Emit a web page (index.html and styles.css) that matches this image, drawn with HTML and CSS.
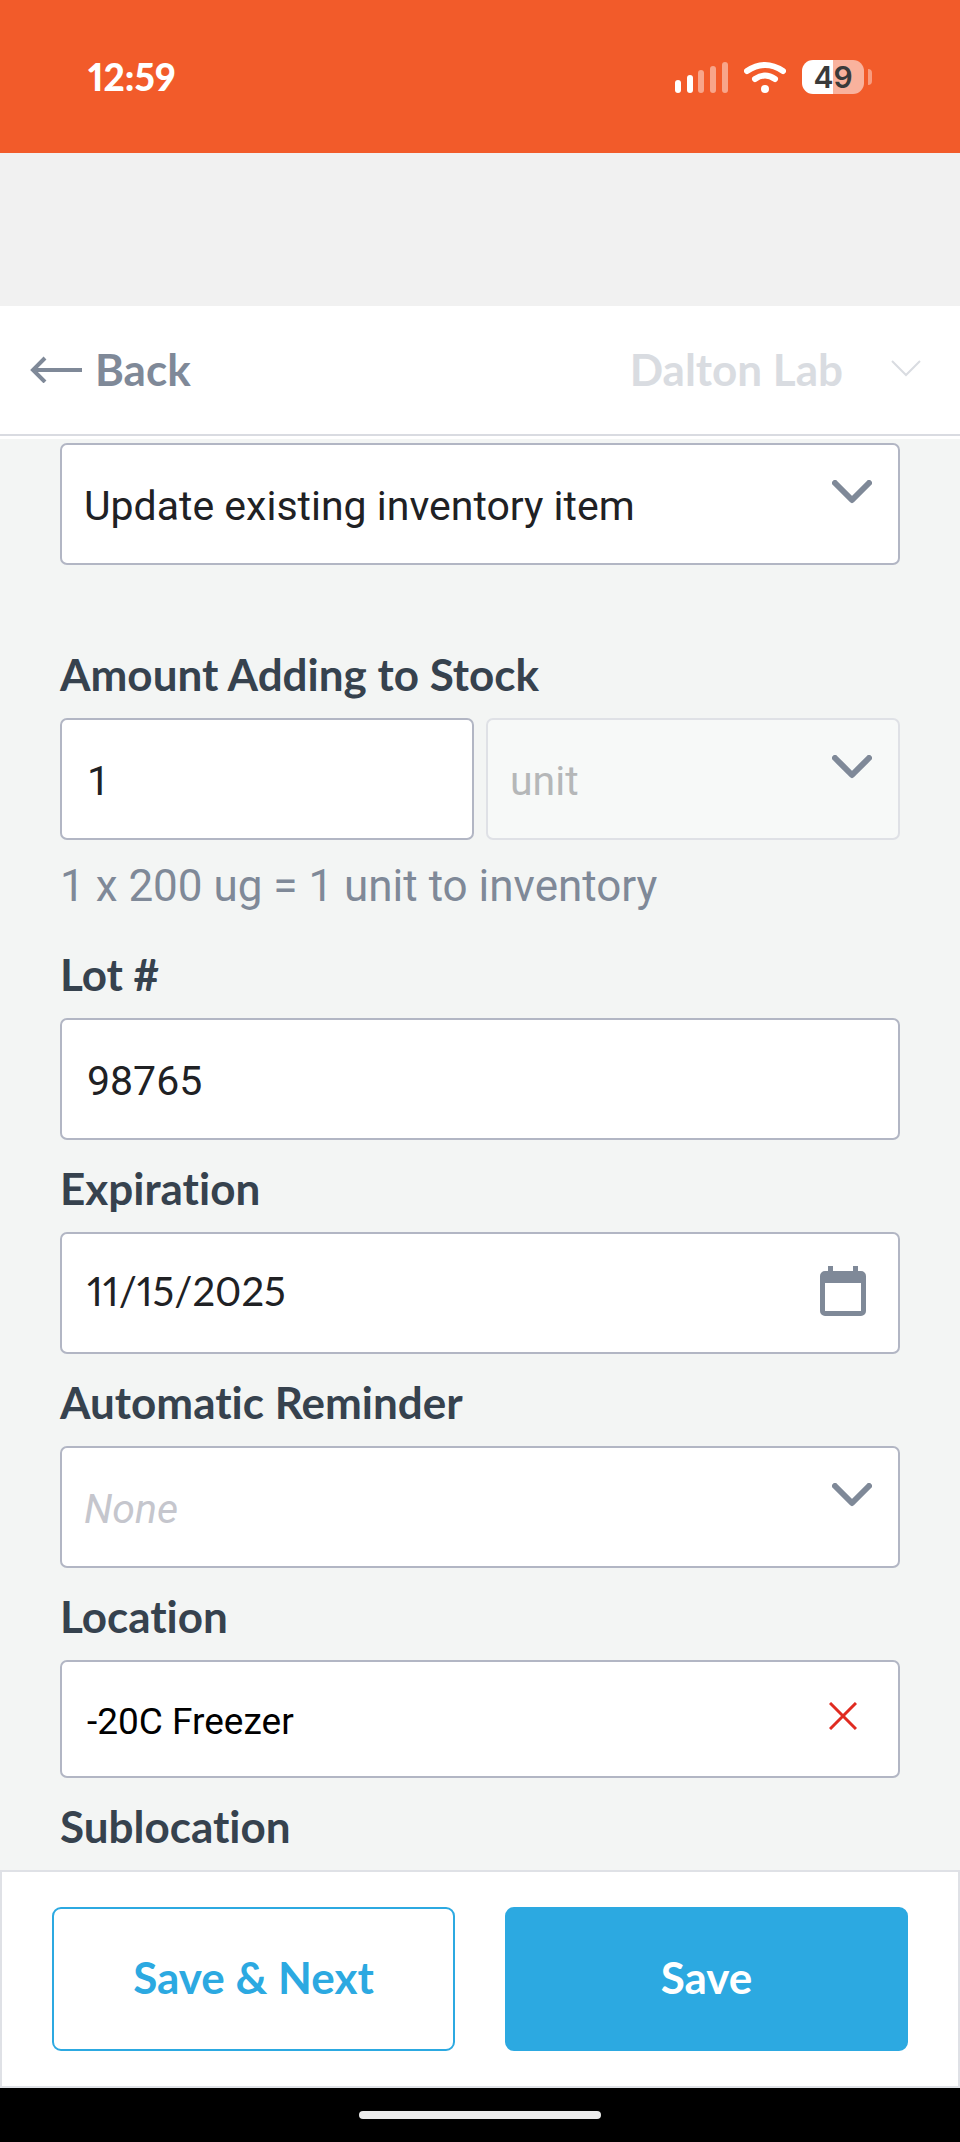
FILE: index.html
```html
<!DOCTYPE html>
<html lang="en">
<head>
    <meta charset="UTF-8">
    <meta name="viewport" content="width=device-width, initial-scale=1.0">
    <title>Update inventory</title>
    <link rel="stylesheet" href="styles.css">
</head>
<body>
    <div class="status-bar">
        <span class="time">12:59</span>
        <div class="status-icons">
            <svg class="signal" width="54" height="34" viewBox="0 0 54 34" fill="#fff">
                <rect x="0" y="20" width="6" height="13" rx="3"/>
                <rect x="12" y="15" width="6" height="18" rx="3"/>
                <rect x="23" y="10" width="6" height="23" rx="3" opacity=".45"/>
                <rect x="35" y="6" width="6" height="27" rx="3" opacity=".45"/>
                <rect x="47" y="2" width="6" height="31" rx="3" opacity=".45"/>
            </svg>
            <svg class="wifi" width="42" height="34" viewBox="0 0 42 34" fill="none" stroke="#fff" stroke-width="6" stroke-linecap="round">
                <path d="M3 11Q21 -1 39 11"/>
                <path d="M11 19Q21 12 31 19"/>
                <circle cx="21" cy="29" r="4" fill="#fff" stroke="none"/>
            </svg>
            <div class="battery">49</div>
            <div class="battery-cap"></div>
        </div>
    </div>
    <div class="spacer"></div>

    <header class="header">
        <a class="back" href="#">
            <svg width="52" height="28" viewBox="0 0 52 28" fill="none" stroke="#7f8998" stroke-width="4">
                <path d="M52 15H3M15 3L3 15L15 27"/>
            </svg>
            Back
        </a>
        <button class="lab" type="button" disabled>
            Dalton Lab
            <svg width="30" height="18" viewBox="0 0 30 18" fill="none" stroke="#d9dce1" stroke-width="2">
                <path d="M1 1L15 15L29 1"/>
            </svg>
        </button>
    </header>

    <form class="form" id="inventory">
        <div class="control">
            <select class="input select" aria-label="Action">
                <option>Update existing inventory item</option>
            </select>
            <svg class="chevron" viewBox="0 0 40 24"><path d="M3 3L20 20L37 3"/></svg>
        </div>

        <label class="label label-amount" for="amount">Amount Adding to Stock</label>
        <div class="row">
            <div class="control">
                <input class="input" id="amount" type="text" inputmode="numeric" value="1">
            </div>
            <div class="control">
                <select class="input select" aria-label="Unit" disabled>
                    <option>unit</option>
                </select>
                <svg class="chevron" viewBox="0 0 40 24"><path d="M3 3L20 20L37 3"/></svg>
            </div>
        </div>
        <p class="hint">1 x 200 ug = 1 unit to inventory</p>

        <label class="label" for="lot">Lot #</label>
        <div class="control">
            <input class="input" id="lot" type="text" value="98765">
        </div>

        <label class="label" for="expiration">Expiration</label>
        <div class="control">
            <input class="input date" id="expiration" type="text" value="11/15/2025">
            <button class="icon-btn" type="button" aria-label="Pick a date">
                <svg width="46" height="52" viewBox="0 0 46 52">
                    <path fill="#7f8998" fill-rule="evenodd" d="M8 1h5v5h20V1h5v5h3a5 5 0 0 1 5 5v35a5 5 0 0 1-5 5H5a5 5 0 0 1-5-5V11a5 5 0 0 1 5-5h3zM5 18v28h36V18z"/>
                </svg>
            </button>
        </div>

        <label class="label" for="reminder">Automatic Reminder</label>
        <div class="control">
            <select class="input select empty" id="reminder">
                <option>None</option>
            </select>
            <svg class="chevron" viewBox="0 0 40 24"><path d="M3 3L20 20L37 3"/></svg>
        </div>

        <label class="label" for="location">Location</label>
        <div class="control">
            <input class="input location" id="location" type="text" value="-20C Freezer">
            <button class="icon-btn clear" type="button" aria-label="Clear location">
                <svg width="28" height="28" viewBox="0 0 28 28" fill="none" stroke="#e02b20" stroke-width="3">
                    <path d="M1 1L27 27M27 1L1 27"/>
                </svg>
            </button>
        </div>

        <div class="label">Sublocation</div>
    </form>

    <footer class="actions">
        <button class="btn btn-outline" type="submit" form="inventory">Save &amp; Next</button>
        <button class="btn btn-primary" type="submit" form="inventory">Save</button>
    </footer>
    <div class="home"><div class="home-bar"></div></div>
</body>
</html>
```
FILE: styles.css
```css
*{
    box-sizing: border-box;
}
body{
    margin: 0;
    min-height: 100vh;
    display: flex;
    flex-direction: column;
    background-color: #f3f5f4;
    font-family: Lato, sans-serif;
    font-size: 44px;
    font-variant-ligatures: none;
}
button, input, select{
    font: inherit;
    font-variant-ligatures: none;
    margin: 0;
}
.status-bar{
    display: flex;
    justify-content: space-between;
    align-items: center;
    height: 153px;
    padding: 0 88px;
    background-color: #f25b2a;
    color: #fff;
}
.time{
    font-size: 37px;
    font-weight: 900;
    font-variant-numeric: proportional-nums;
}
.status-icons{
    display: flex;
    align-items: center;
}
.wifi{
    margin: 0 16px 0 15px;
}
.battery{
    width: 62px;
    height: 34px;
    border-radius: 11px;
    background: linear-gradient(to right, #fff 50%, #f9b29d 50%);
    color: #3a3a3a;
    font-family: Inter, sans-serif;
    font-size: 30px;
    font-weight: 600;
    line-height: 34px;
    text-align: center;
}
.battery-cap{
    width: 4px;
    height: 16px;
    margin-left: 4px;
    border-radius: 0 4px 4px 0;
    background-color: #f89c7f;
}
.spacer{
    height: 153px;
    background-color: #f1f1f1;
}

.header{
    display: flex;
    justify-content: space-between;
    align-items: center;
    height: 130px;
    padding: 0 39px 2px 30px;
    border-bottom: 2px solid #d9dbe1;
    background-color: #fff;
    box-shadow: 0 3px #fff;
    font-weight: 700;
}
.back{
    display: flex;
    align-items: center;
    gap: 13px;
    color: #7f8998;
    text-decoration: none;
}
.lab{
    display: flex;
    align-items: center;
    gap: 48px;
    padding: 0;
    border: 0;
    background: none;
    color: #d9dce1;
}

.form{
    flex: 1;
    padding: 7px 60px 0;
}
.row{
    display: flex;
    gap: 12px;
}
.control{
    flex: 1;
    position: relative;
}
.label{
    display: block;
    padding: 20px 0 16px;
    line-height: 56px;
    color: #36424e;
    font-weight: 700;
}
.label-amount{
    padding-top: 81px;
}
.input{
    display: block;
    width: 100%;
    height: 122px;
    padding: 4px 100px 0 25px;
    border: 2px solid #b2b6c4;
    border-radius: 7px;
    background-color: #fff;
    color: #202124;
    font-family: Roboto, sans-serif;
    font-size: 41px;
}
.select{
    appearance: none;
    padding-left: 22px;
}
.select:disabled{
    border-color: #dfe1e6;
    background-color: #f7f9f8;
    color: #b5b7b8;
    opacity: 1;
}
.empty{
    color: #c5c6cd;
    font-style: italic;
}
.date{
    padding-top: 0;
    padding-bottom: 4px;
    font-family: Lato, sans-serif;
    font-size: 40px;
    font-variant-numeric: proportional-nums;
}
.location{
    height: 118px;
    color: #000;
    font-size: 37px;
}
.chevron{
    position: absolute;
    top: 37px;
    right: 28px;
    width: 40px;
    height: 24px;
    fill: none;
    stroke: #7f8998;
    stroke-width: 6;
    stroke-linecap: round;
    stroke-linejoin: round;
    pointer-events: none;
}
.icon-btn{
    position: absolute;
    top: 33px;
    right: 34px;
    display: flex;
    padding: 0;
    border: 0;
    background: none;
}
.clear{
    top: 42px;
    right: 43px;
}
.hint{
    margin: 20px 0 14px;
    color: #7f8998;
    font-family: Roboto, sans-serif;
    font-size: 44px;
    line-height: 52px;
}

.actions{
    display: flex;
    gap: 50px;
    padding: 35px 50px;
    border: 2px solid #dfe1e6;
    background-color: #fff;
}
.btn{
    flex: 1;
    height: 144px;
    padding: 0 0 4px;
    border: 2px solid #2ca9e1;
    border-radius: 9px;
    font-weight: 700;
}
.btn-outline{
    background-color: #fff;
    color: #2ca9e1;
}
.btn-primary{
    background-color: #2ca9e1;
    color: #fff;
}
.home{
    display: flex;
    align-items: center;
    justify-content: center;
    height: 54px;
    background-color: #000;
}
.home-bar{
    width: 242px;
    height: 8px;
    border-radius: 4px;
    background-color: #ebebeb;
}
```
